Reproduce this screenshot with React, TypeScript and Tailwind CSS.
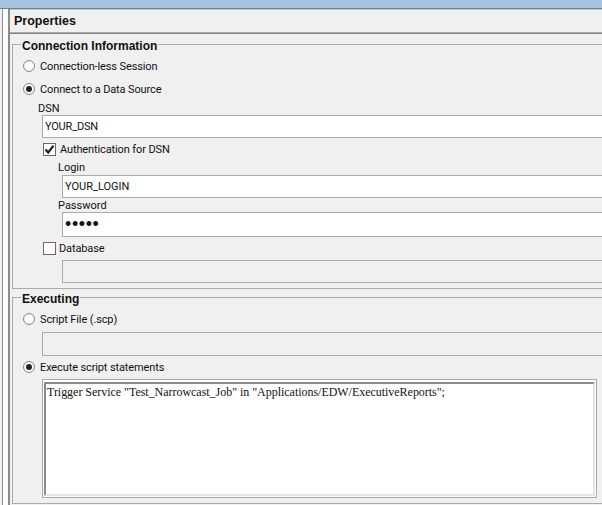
import React from "react";

const ui = "font-['Roboto',Arial,sans-serif]";

function Radio({ on, label, className }: { on?: boolean; label: string; className?: string }) {
  return (
    <div className={"flex items-center gap-[5px] h-[18px] tracking-[-0.12px] " + (className ?? "")}>
      <span className="w-[12px] h-[12px] rounded-full border border-[#8a8a8a] bg-white flex items-center justify-center shadow-[inset_0_0_1px_#bbb]">
        {on && <span className="w-[6px] h-[6px] rounded-full bg-[#222]" />}
      </span>
      <span>{label}</span>
    </div>
  );
}

function Check({ on, label, className }: { on?: boolean; label: string; className?: string }) {
  return (
    <div className={"flex items-center h-[18px] tracking-[-0.12px] " + (on ? "gap-[4px] " : "gap-[3px] ") + (className ?? "")}>
      <span className="w-[13px] h-[13px] border border-[#6a6a6a] bg-white flex items-center justify-center">
        {on && (
          <svg width="11" height="11" viewBox="0 0 11 11">
            <path d="M1.5 5.5 L4.2 8.5 L9.5 1.8" fill="none" stroke="#222" strokeWidth="2.2" />
          </svg>
        )}
      </span>
      <span>{label}</span>
    </div>
  );
}

function Field({ value, className, disabled }: { value?: string; className?: string; disabled?: boolean }) {
  return (
    <div
      className={
        "border border-[#ababab] border-r-0 flex items-center pl-[2px] " +
        (disabled ? "bg-[#f0f0f0] " : "bg-white ") +
        (className ?? "")
      }
    >
      {value}
    </div>
  );
}

function Legend({ children }: { children: string }) {
  return (
    <div className="absolute left-[8px] top-[-6px] bg-[#f0f0f0] px-[1px] font-['Liberation_Sans',Arial,sans-serif] text-[12px] font-bold leading-[15px] text-[#111]">
      {children}
    </div>
  );
}

export default function App() {
  return (
    <div className={"w-[602px] h-[505px] overflow-hidden bg-[#f0f0f0] text-[11px] leading-[15px] text-[#111] flex flex-col " + ui}>
      <div className="h-[9px] shrink-0 bg-[#a6c3de] border-b border-[#6f7f8e]" />
      <div className="flex-1 flex min-h-0">
        <div className="w-[3px] shrink-0 bg-[#f0f0f0] border-r border-[#8f8f8f]" />
        <div className="w-[7px] shrink-0 bg-white border-r-2 border-[#8c8c8c]" />
        <div className="flex-1 flex flex-col min-w-0">
          <div className="h-[24px] shrink-0 border-t border-[#c4c4c4] border-b border-b-[#ababab] flex items-center pl-[4px] font-['Liberation_Sans',Arial,sans-serif] text-[12.5px] font-bold text-[#111]">
            Properties
          </div>
          <div className="h-[1px] shrink-0 bg-[#808080]" />
          <div className="h-[10px] shrink-0" />
          <section className="relative ml-[2px] h-[245px] shrink-0 border border-r-0 border-[#ababab] pl-[10px] pt-[12px]">
            <Legend>Connection Information</Legend>
            <Radio label="Connection-less Session" />
            <Radio on label="Connect to a Data Source" className="mt-[5px]" />
            <div className="pl-[15px] mt-[3px] h-[14px]">DSN</div>
            <Field value="YOUR_DSN" className="ml-[19px] h-[23px] tracking-[-0.2px]" />
            <Check on label="Authentication for DSN" className="ml-[20px] mt-[2px]" />
            <div className="pl-[35px] mt-[2px]">Login</div>
            <Field value="YOUR_LOGIN" className="ml-[39px] h-[23px]" />
            <div className="pl-[35px] h-[14px]">Password</div>
            <Field className="ml-[39px] h-[25px] font-['Liberation_Sans',Arial,sans-serif] text-[18px] tracking-[0.6px]" value="•••••" />
            <Check label="Database" className="ml-[20px] mt-[2px]" />
            <Field disabled className="ml-[39px] mt-[3px] h-[23px]" />
          </section>
          <div className="h-[8px] shrink-0" />
          <section className="relative ml-[2px] mb-[1px] flex-1 border border-r-0 border-[#ababab] pl-[10px] pt-[12px]">
            <Legend>Executing</Legend>
            <Radio label="Script File (.scp)" />
            <Field disabled className="ml-[19px] mt-[4px] h-[24px]" />
            <Radio on label="Execute script statements" className="mt-[2px]" />
            <div className="ml-[19px] mt-[3px] mr-[5px] h-[119px] bg-white border border-[#a8a8a8] px-[1px] pt-[2px] pb-[1px]">
              <div className="w-full h-full border-2 border-[#8a8a8a] border-r-[#e4e4e4] border-b-[#e4e4e4] pl-[1px] pt-[1px] font-['Liberation_Serif',serif] text-[12px] leading-[15px] tracking-[-0.03px] text-[#111]">
                Trigger Service "Test_Narrowcast_Job" in "Applications/EDW/ExecutiveReports";
              </div>
            </div>
          </section>
        </div>
      </div>
    </div>
  );
}
